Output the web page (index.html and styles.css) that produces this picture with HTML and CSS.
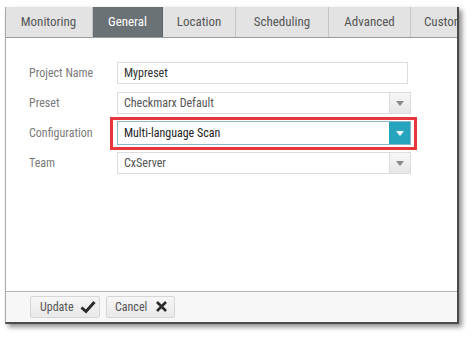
FILE: index.html
```html
<!DOCTYPE html>
<html lang="en">
<head>
    <meta charset="UTF-8">
    <meta name="viewport" content="width=device-width, initial-scale=1.0">
    <title>Project Settings</title>
    <link rel="stylesheet" href="styles.css">
</head>
<body>
    <div class="window">
        <ul class="tabs">
            <li class="tab tab-monitoring">Monitoring</li>
            <li class="tab tab-general active">General</li>
            <li class="tab tab-location">Location</li>
            <li class="tab tab-scheduling">Scheduling</li>
            <li class="tab tab-advanced">Advanced</li>
            <li class="tab tab-custom">Custom Fields</li>
        </ul>

        <div class="panel">
            <form class="settings-form">
                <div class="form-row">
                    <label for="projectName">Project Name</label>
                    <input type="text" id="projectName" class="text-input" value="Mypreset">
                </div>
                <div class="form-row">
                    <label>Preset</label>
                    <div class="select">
                        <span class="select-value">Checkmarx Default</span>
                        <span class="select-arrow"></span>
                    </div>
                </div>
                <div class="form-row">
                    <label>Configuration</label>
                    <div class="select select-focused">
                        <span class="select-value">Multi-language Scan</span>
                        <span class="select-arrow"></span>
                        <span class="highlight"></span>
                    </div>
                </div>
                <div class="form-row">
                    <label>Team</label>
                    <div class="select">
                        <span class="select-value">CxServer</span>
                        <span class="select-arrow"></span>
                    </div>
                </div>
            </form>
        </div>

        <div class="footer">
            <button type="button" class="btn btn-update">
                Update
                <svg width="16" height="14" viewBox="0 0 16 14">
                    <path d="M1.5 7.5 L6 11.5 L14.5 2" fill="none" stroke="#2b2b2b" stroke-width="3"/>
                </svg>
            </button>
            <button type="button" class="btn btn-cancel">
                Cancel
                <svg width="13" height="13" viewBox="0 0 13 13">
                    <path d="M2 2 L11 11 M11 2 L2 11" fill="none" stroke="#2b2b2b" stroke-width="2.6"/>
                </svg>
            </button>
        </div>
    </div>
</body>
</html>
```

FILE: styles.css
```css
* {
    margin: 0;
    padding: 0;
    box-sizing: border-box;
    font-family: "Roboto Condensed", "Liberation Sans Narrow", Roboto, sans-serif;
    font-stretch: condensed;
}

body {
    background-color: #fff;
    width: 474px;
    height: 345px;
    overflow: hidden;
    padding: 7px 0 0 5px;
}

.window {
    width: 454px;
    height: 317px;
    display: flex;
    flex-direction: column;
    background-color: #fff;
    border-left: 1px solid #a9a9a9;
    border-right: 2px solid #4a4a4a;
    border-bottom: 2px solid #4a4a4a;
    box-shadow: 3px 3px 5px rgba(0, 0, 0, 0.45);
    overflow: hidden;
}

.tabs {
    list-style: none;
    display: flex;
    height: 31px;
    flex-shrink: 0;
    border-bottom: 1px solid #9c9c9c;
    margin-left: -1px;
    background-color: #e3e3e3;
}

.tab {
    flex-shrink: 0;
    height: 30px;
    line-height: 30px;
    text-align: center;
    font-size: 13px;
    color: #565656;
    background-color: #e3e3e3;
    border-right: 1px solid #c4c4c4;
    white-space: nowrap;
}

.tab.active {
    background-color: #6b7275;
    color: #fff;
    border-right-color: #5d6366;
}

.tab-monitoring { width: 88px; }
.tab-general { width: 70px; }
.tab-location { width: 73px; }
.tab-scheduling { width: 93px; }
.tab-advanced { width: 82px; }
.tab-custom { width: 90px; text-align: left; padding-left: 13px; }

.panel {
    flex: 1;
    padding: 24px 0 0 23px;
}

.settings-form {
    display: flex;
    flex-direction: column;
    gap: 8px;
}

.form-row {
    display: flex;
    align-items: center;
    height: 22px;
}

.form-row label {
    width: 88px;
    flex-shrink: 0;
    font-size: 12px;
    color: #7a7a7a;
}

.text-input {
    width: 291px;
    height: 22px;
    border: 1px solid #dcdcdc;
    padding: 0 6px;
    font-size: 12px;
    color: #333;
    outline: none;
}

.select {
    position: relative;
    display: flex;
    width: 294px;
    height: 22px;
    border: 1px solid #dcdcdc;
}

.select-value {
    flex: 1;
    padding-left: 6px;
    font-size: 12px;
    line-height: 20px;
    color: #555;
}

.select-arrow {
    width: 21px;
    border-left: 1px solid #dcdcdc;
    background: linear-gradient(#f7f7f7, #e6e6e6);
    display: flex;
    align-items: center;
    justify-content: center;
}

.select-arrow::after {
    content: "";
    border-left: 4px solid transparent;
    border-right: 4px solid transparent;
    border-top: 5px solid #8a8a8a;
}

.select-focused {
    height: 24px;
    border-color: #8db8c8;
}

.select-focused .select-value {
    color: #222;
    line-height: 22px;
}

.select-focused .select-arrow {
    background: #27a4bd;
    border-left-color: #27a4bd;
}

.select-focused .select-arrow::after {
    border-top-color: #fff;
}

.highlight {
    position: absolute;
    left: -8px;
    right: -7px;
    top: -5px;
    bottom: -6px;
    border: 3px solid #e8363d;
}

.footer {
    height: 31px;
    flex-shrink: 0;
    background-color: #f7f7f7;
    border-top: 1px solid #b3b3b3;
    display: flex;
    align-items: center;
    gap: 6px;
    padding: 0 0 1px 24px;
}

.btn {
    height: 22px;
    display: flex;
    align-items: center;
    justify-content: space-between;
    border: 1px solid #d6d6d6;
    border-radius: 2px;
    background: linear-gradient(#f6f6f6, #e9e9e9);
    font-size: 12px;
    color: #555;
    cursor: pointer;
}

.btn-update {
    width: 70px;
    padding: 0 3px 0 9px;
}

.btn-cancel {
    width: 69px;
    padding: 0 6px 0 8px;
}
```
